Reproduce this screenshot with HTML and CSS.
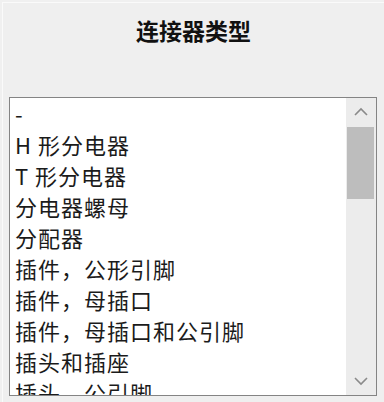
FILE: index.html
```html
<!DOCTYPE html>
<html lang="zh-CN">

<head>
    <meta charset="UTF-8">
    <meta name="viewport" content="width=device-width, initial-scale=1.0">
    <title>连接器类型</title>
    <link rel="stylesheet" href="styles.css">
</head>

<body>
    <div class="panel">
        <div class="header">
            <h1>连接器类型</h1>
        </div>

        <div class="listbox">
            <ul class="items">
                <li>-</li>
                <li>H 形分电器</li>
                <li>T 形分电器</li>
                <li>分电器螺母</li>
                <li>分配器</li>
                <li>插件，公形引脚</li>
                <li>插件，母插口</li>
                <li>插件，母插口和公引脚</li>
                <li>插头和插座</li>
                <li>插头，公引脚</li>
            </ul>

            <div class="scrollbar">
                <div class="arrow">
                    <svg width="16" height="10" viewBox="0 0 16 10">
                        <path d="M2 8 L8 2 L14 8" fill="none" stroke="#8a8a8a" stroke-width="1.6" />
                    </svg>
                </div>
                <div class="thumb"></div>
                <div class="track"></div>
                <div class="arrow">
                    <svg width="16" height="10" viewBox="0 0 16 10">
                        <path d="M2 2 L8 8 L14 2" fill="none" stroke="#8a8a8a" stroke-width="1.6" />
                    </svg>
                </div>
            </div>
        </div>
    </div>
</body>

</html>
```

FILE: styles.css
```css
* {
    box-sizing: border-box;
    margin: 0;
    padding: 0;
}

body {
    background-color: #f0f0f0;
    font-family: "Noto Sans CJK SC", "Microsoft YaHei", sans-serif;
    width: 384px;
    height: 402px;
    overflow: hidden;
}

.panel {
    height: 402px;
    border-top: 1px solid #fafafa;
    margin-top: 2px;
    margin-left: 2px;
    border-left: 1px solid #fafafa;
    background-color: #efefef;
}

.header {
    height: 94px;
    display: flex;
    justify-content: center;
    padding-top: 12px;
}

.header h1 {
    font-size: 23px;
    font-weight: 700;
    line-height: 30px;
    color: #111;
}

.listbox {
    display: flex;
    margin-left: 6px;
    width: 368px;
    height: 299px;
    border: 1px solid #848484;
    background-color: #fff;
    overflow: hidden;
}

.items {
    list-style: none;
    flex: 1;
    padding-left: 5px;
    font-size: 22px;
    letter-spacing: 1px;
    line-height: 31px;
    color: #1b1b1b;
    white-space: nowrap;
}

.scrollbar {
    width: 30px;
    display: flex;
    flex-direction: column;
    background-color: #ececec;
    padding-right: 1px;
}

.arrow {
    height: 28px;
    display: flex;
    align-items: center;
    justify-content: center;
}

.thumb {
    height: 72px;
    margin: 1px 1px 0 1px;
    background-color: #bdbdbd;
}

.track {
    flex: 1;
}
```
